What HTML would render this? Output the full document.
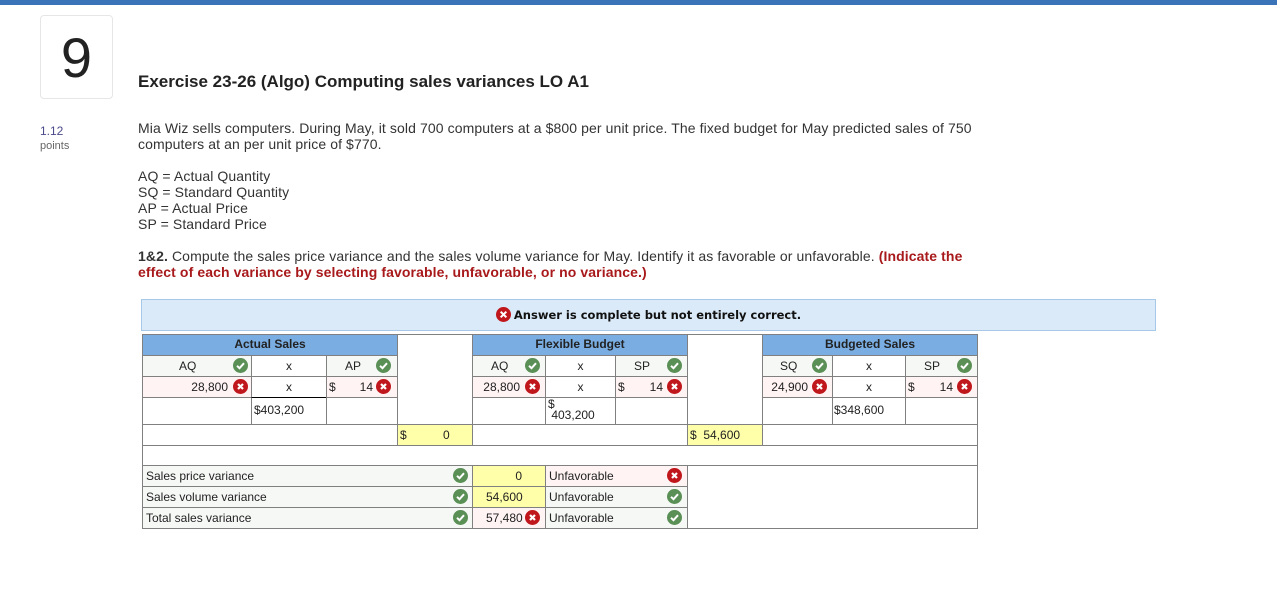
<!DOCTYPE html>
<html><head><meta charset="utf-8"><style>
*{margin:0;padding:0;box-sizing:border-box}
body{width:1277px;height:614px;background:#fff;position:relative;overflow:hidden;font-family:"Liberation Sans",sans-serif;color:#222}
.a{position:absolute}
.t{font-size:14px;line-height:16px;color:#333;letter-spacing:0.1px}
.c{position:absolute;border:1px solid #808080;font-size:12px;line-height:20px;color:#222;background:#fff}
.h{background:#7aaee3;font-weight:bold;text-align:center;line-height:19px}
.g{background:#f6f8f6}
.p{background:#fff3f3}
.y{background:#ffffaa}
</style></head><body>
<div class="a" style="left:0;top:0;width:1277px;height:5px;background:#3b73b9"></div>
<div class="a" style="left:40px;top:15px;width:73px;height:84px;border:1px solid #e6e6e6;border-radius:4px;font-size:56px;line-height:84px;text-align:center;color:#222">9</div>
<div class="a" style="left:138px;top:72px;font-size:17px;font-weight:bold;color:#222">Exercise 23-26 (Algo) Computing sales variances LO A1</div>
<div class="a" style="left:40px;top:124px;font-size:12px;color:#4a4a8a">1.12</div>
<div class="a" style="left:40px;top:140px;font-size:11px;color:#666">points</div>
<div class="a t" style="left:138px;top:120px">Mia Wiz sells computers. During May, it sold 700 computers at a $800 per unit price. The fixed budget for May predicted sales of 750<br>computers at an per unit price of $770.</div>
<div class="a t" style="left:138px;top:168px">AQ = Actual Quantity<br>SQ = Standard Quantity<br>AP = Actual Price<br>SP = Standard Price</div>
<div class="a t" style="left:138px;top:248px"><b>1&amp;2.</b> Compute the sales price variance and the sales volume variance for May. Identify it as favorable or unfavorable. <b style="color:#a8191b">(Indicate the<br>effect of each variance by selecting favorable, unfavorable, or no variance.)</b></div>
<div class="a" style="left:141px;top:299px;width:1015px;height:32px;background:#daeaf8;border:1px solid #a8c8e8;font-family:'DejaVu Sans',sans-serif;font-weight:bold;font-size:11.5px;line-height:30px;text-align:center;color:#111"><svg width="15" height="15" viewBox="0 0 16 16" style="vertical-align:-3px;margin-right:3px"><circle cx="8" cy="8" r="8" fill="#c0171c"/><path d="M5 5L11 11M11 5L5 11" stroke="#fff" stroke-width="2.2"/></svg>Answer is complete but not entirely correct.</div>

<div class="c h" style="left:142px;top:334px;width:256px;height:22px">Actual Sales</div>
<div class="c" style="left:397px;top:334px;width:76px;height:91px"></div>
<div class="c h" style="left:472px;top:334px;width:216px;height:22px">Flexible Budget</div>
<div class="c" style="left:687px;top:334px;width:76px;height:91px"></div>
<div class="c h" style="left:762px;top:334px;width:216px;height:22px">Budgeted Sales</div>

<div class="c g" style="left:142px;top:355px;width:110px;height:22px;padding-left:36px">AQ</div>
<div class="c" style="left:251px;top:355px;width:76px;height:22px;text-align:center">x</div>
<div class="c g" style="left:326px;top:355px;width:72px;height:22px;padding-left:18px">AP</div>
<div class="c g" style="left:472px;top:355px;width:74px;height:22px;padding-left:18px">AQ</div>
<div class="c" style="left:545px;top:355px;width:71px;height:22px;text-align:center">x</div>
<div class="c g" style="left:615px;top:355px;width:73px;height:22px;padding-left:18px">SP</div>
<div class="c g" style="left:762px;top:355px;width:71px;height:22px;padding-left:17px">SQ</div>
<div class="c" style="left:832px;top:355px;width:74px;height:22px;text-align:center">x</div>
<div class="c g" style="left:905px;top:355px;width:73px;height:22px;padding-left:18px">SP</div>

<div class="c p" style="left:142px;top:376px;width:110px;height:22px;text-align:right;padding-right:23px">28,800</div>
<div class="c" style="left:251px;top:376px;width:76px;height:22px;text-align:center">x</div>
<div class="c p" style="left:326px;top:376px;width:72px;height:22px;padding-left:2px">$<span style="position:absolute;right:24px">14</span></div>
<div class="c p" style="left:472px;top:376px;width:74px;height:22px;text-align:right;padding-right:25px">28,800</div>
<div class="c" style="left:545px;top:376px;width:71px;height:22px;text-align:center">x</div>
<div class="c p" style="left:615px;top:376px;width:73px;height:22px;padding-left:2px">$<span style="position:absolute;right:24px">14</span></div>
<div class="c p" style="left:762px;top:376px;width:71px;height:22px;text-align:right;padding-right:24px">24,900</div>
<div class="c" style="left:832px;top:376px;width:74px;height:22px;text-align:center">x</div>
<div class="c p" style="left:905px;top:376px;width:73px;height:22px;padding-left:2px">$<span style="position:absolute;right:24px">14</span></div>

<div class="c" style="left:142px;top:397px;width:110px;height:28px"></div>
<div class="c" style="left:251px;top:397px;width:76px;height:28px;border-top:1px solid #000;padding-left:2px;line-height:24px">$403,200</div>
<div class="c" style="left:326px;top:397px;width:72px;height:28px"></div>
<div class="c" style="left:472px;top:397px;width:74px;height:28px"></div>
<div class="c" style="left:545px;top:397px;width:71px;height:28px;line-height:11px;padding-left:2px;padding-top:1px">$<br>&nbsp;403,200</div>
<div class="c" style="left:615px;top:397px;width:73px;height:28px"></div>
<div class="c" style="left:762px;top:397px;width:71px;height:28px"></div>
<div class="c" style="left:832px;top:397px;width:74px;height:28px;padding-left:1px;line-height:24px">$348,600</div>
<div class="c" style="left:905px;top:397px;width:73px;height:28px"></div>

<div class="c" style="left:142px;top:424px;width:256px;height:22px"></div>
<div class="c y" style="left:397px;top:424px;width:76px;height:22px;padding-left:2px">$<span style="position:absolute;left:45px">0</span></div>
<div class="c" style="left:472px;top:424px;width:216px;height:22px"></div>
<div class="c y" style="left:687px;top:424px;width:76px;height:22px;padding-left:2px">$&nbsp;&nbsp;54,600</div>
<div class="c" style="left:762px;top:424px;width:216px;height:22px"></div>
<div class="c" style="left:142px;top:445px;width:836px;height:21px"></div>

<div class="c g" style="left:142px;top:465px;width:331px;height:22px;padding-left:3px">Sales price variance</div>
<div class="c g" style="left:142px;top:486px;width:331px;height:22px;padding-left:3px">Sales volume variance</div>
<div class="c g" style="left:142px;top:507px;width:331px;height:22px;padding-left:3px">Total sales variance</div>
<div class="c y" style="left:472px;top:465px;width:74px;height:22px;text-align:right;padding-right:23px">0</div>
<div class="c y" style="left:472px;top:486px;width:74px;height:22px;padding-left:13px">54,600</div>
<div class="c p" style="left:472px;top:507px;width:74px;height:22px;padding-left:13px">57,480</div>
<div class="c p" style="left:545px;top:465px;width:143px;height:22px;padding-left:3px">Unfavorable</div>
<div class="c g" style="left:545px;top:486px;width:143px;height:22px;padding-left:3px">Unfavorable</div>
<div class="c g" style="left:545px;top:507px;width:143px;height:22px;padding-left:3px">Unfavorable</div>
<div class="c" style="left:687px;top:465px;width:291px;height:64px"></div>

<svg width="1277" height="614" style="position:absolute;left:0;top:0">
<defs>
<g id="ok"><circle cx="7.5" cy="7.5" r="7.5" fill="#5a8f56"/><path d="M4 7.8L6.5 10.2L11 5.2" stroke="#fff" stroke-width="2" fill="none"/></g>
<g id="no"><circle cx="7.5" cy="7.5" r="7.5" fill="#c0171c"/><path d="M5 5L10 10M10 5L5 10" stroke="#fff" stroke-width="2.2"/></g>
</defs>
<use href="#ok" x="233" y="358"/>
<use href="#ok" x="376" y="358"/>
<use href="#ok" x="525" y="358"/>
<use href="#ok" x="667" y="358"/>
<use href="#ok" x="812" y="358"/>
<use href="#ok" x="957" y="358"/>
<use href="#no" x="233" y="379"/>
<use href="#no" x="376" y="379"/>
<use href="#no" x="525" y="379"/>
<use href="#no" x="667" y="379"/>
<use href="#no" x="812" y="379"/>
<use href="#no" x="957" y="379"/>
<use href="#ok" x="453" y="468"/>
<use href="#ok" x="453" y="489"/>
<use href="#ok" x="453" y="510"/>
<use href="#no" x="525" y="510"/>
<use href="#no" x="667" y="468"/>
<use href="#ok" x="667" y="489"/>
<use href="#ok" x="667" y="510"/>
</svg>
</body></html>
